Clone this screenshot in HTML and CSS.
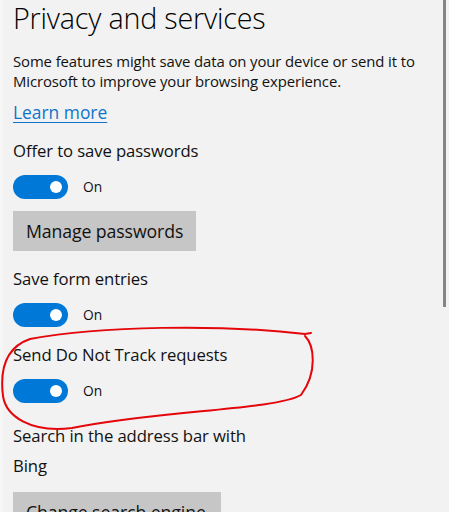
FILE: index.html
```html
<!DOCTYPE html>
<html lang="en">
<head>
<meta charset="utf-8">
<title>Privacy and services</title>
<link rel="stylesheet" href="styles.css">
</head>
<body>
<div class="window">
  <main class="panel">
    <h1 class="title">Privacy and services</h1>
    <p class="desc">Some features might save data on your device or send it to Microsoft to improve your browsing experience.</p>
    <a class="link" href="#">Learn more</a>

    <section class="setting">
      <div class="label">Offer to save passwords</div>
      <div class="toggle-row">
        <span class="toggle"><span class="knob"></span></span>
        <span class="state">On</span>
      </div>
      <button class="btn">Manage passwords</button>
    </section>

    <section class="setting">
      <div class="label">Save form entries</div>
      <div class="toggle-row">
        <span class="toggle"><span class="knob"></span></span>
        <span class="state">On</span>
      </div>
    </section>

    <section class="setting">
      <div class="label">Send Do Not Track requests</div>
      <div class="toggle-row">
        <span class="toggle"><span class="knob"></span></span>
        <span class="state">On</span>
      </div>
    </section>

    <section class="setting">
      <div class="label label-wrap">Search in the address bar with Bing</div>
      <button class="btn btn-search">Change search engine</button>
    </section>
  </main>
  <div class="scrollbar"><div class="thumb"></div></div>
</div>
<svg class="annotation" width="449" height="512" viewBox="0 0 449 512">
  <path d="M 305 336 C 314 345, 318 372, 301 395 C 275 410, 160 410, 72 428 C 30 433, 6 416, 3 396 C 0 372, 4 348, 30 339 C 100 326, 220 324, 305 334 L 311 333" fill="none" stroke="#e4060b" stroke-width="2" stroke-linecap="round" stroke-linejoin="round"/>
</svg>
</body>
</html>
```
FILE: styles.css
```css
* { box-sizing: border-box; }
html, body {
  margin: 0;
  padding: 0;
  width: 449px;
  height: 512px;
  overflow: hidden;
  background: #f2f2f2;
}
body {
  font-family: "Open Sans", "Noto Sans", "Liberation Sans", sans-serif;
  color: #111;
  position: relative;
}
.window {
  display: flex;
  height: 512px;
  border-left: 3px solid #f6f6f6;
}
.panel {
  flex: 1;
  padding-left: 10px;
  display: flex;
  flex-direction: column;
  align-items: flex-start;
  overflow: hidden;
}
.panel > * {
  flex-shrink: 0;
}
.title {
  margin: 0;
  font-weight: 300;
  font-size: 28.7px;
  line-height: 36px;
  height: 42px;
  color: #000;
  letter-spacing: -0.2px;
  white-space: nowrap;
}
.desc {
  margin: 10px 0 0 0;
  font-size: 14.9px;
  line-height: 19.5px;
  width: 412px;
  letter-spacing: -0.1px;
}
.link {
  margin-top: 9px;
  font-size: 17.4px;
  line-height: 24px;
  color: #0f74cc;
  text-decoration: underline;
  text-underline-offset: 3px;
  text-decoration-thickness: 1px;
}
.setting {
  display: flex;
  flex-direction: column;
  align-items: flex-start;
  margin-top: 16px;
}
.setting:first-of-type {
  margin-top: 15px;
}
.label {
  font-size: 16.7px;
  line-height: 24px;
  color: #111;
  letter-spacing: -0.1px;
}
.label-wrap {
  width: 262px;
  line-height: 30px;
  margin-top: 2px;
}
.toggle-row {
  display: flex;
  align-items: center;
  margin-top: 12px;
  height: 24px;
}
.toggle {
  width: 55px;
  height: 24px;
  border-radius: 12px;
  background: #0078d7;
  display: flex;
  align-items: center;
  justify-content: flex-end;
  padding-right: 6px;
}
.knob {
  width: 12px;
  height: 12px;
  border-radius: 50%;
  background: #fff;
}
.state {
  margin-left: 15px;
  font-size: 13.8px;
  color: #111;
  line-height: 24px;
}
.btn {
  margin-top: 12px;
  border: none;
  background: #c6c6c6;
  font-family: inherit;
  font-size: 17.7px;
  color: #111;
  height: 40px;
  padding: 0 13px;
  letter-spacing: -0.1px;
  white-space: nowrap;
}
.btn-search {
  margin-top: 11px;
  width: 208px;
  text-align: left;
}
.scrollbar {
  width: 8px;
  flex: none;
  padding-left: 2px;
  background: #f2f2f2;
}
.thumb {
  width: 3px;
  height: 307px;
  background: #858585;
}
.annotation {
  position: absolute;
  left: 0;
  top: 0;
  pointer-events: none;
}
```
